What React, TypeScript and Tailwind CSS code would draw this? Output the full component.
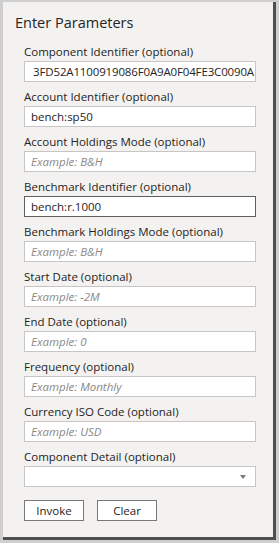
import React from "react";

type Field = {
  label: string;
  value?: string;
  placeholder?: string;
  focused?: boolean;
  overflow?: boolean;
};

const FIELDS: Field[] = [
  { label: "Component Identifier (optional)", value: "3FD52A1100919086F0A9A0F04FE3C0090A", overflow: true },
  { label: "Account Identifier (optional)", value: "bench:sp50" },
  { label: "Account Holdings Mode (optional)", placeholder: "Example: B&H" },
  { label: "Benchmark Identifier (optional)", value: "bench:r.1000", focused: true },
  { label: "Benchmark Holdings Mode (optional)", placeholder: "Example: B&H" },
  { label: "Start Date (optional)", placeholder: "Example: -2M" },
  { label: "End Date (optional)", placeholder: "Example: 0" },
  { label: "Frequency (optional)", placeholder: "Example: Monthly" },
  { label: "Currency ISO Code (optional)", placeholder: "Example: USD" },
];

const font = { fontFamily: '"Open Sans", "Noto Sans", sans-serif' };

function TextBox({ field }: { field: Field }) {
  const border = field.focused ? "border-[#605e5c]" : "border-[#c8c6c4]";
  return (
    <div
      className={`h-[21px] w-[232px] bg-white border ${border} flex items-center overflow-hidden whitespace-nowrap text-[11.5px] leading-[16px] ${
        field.overflow ? "justify-end pr-[1px] tracking-[-0.15px]" : "pl-[6px]"
      }`}
    >
      {field.value ? (
        <span className="text-[#252423]">{field.value}</span>
      ) : (
        <span className="italic text-[#8a8886]">{field.placeholder}</span>
      )}
    </div>
  );
}

export default function App() {
  return (
    <div className="w-[279px] h-[543px] bg-[#cfcfcf] overflow-hidden" style={font}>
      <div className="mt-[2px] ml-[3px] w-[273px] h-[538px] bg-[#f3f2f1] border-r-[3px] border-b-[3px] border-[#4f4f4f]">
        <div className="pl-[12px] pt-[11px] h-[35px] text-[14.5px] leading-[20px] text-[#252423]">
          Enter Parameters
        </div>
        <div className="pl-[21px]">
          {FIELDS.map((f) => (
            <div key={f.label}>
              <div className="pt-[7px] pb-[1px] text-[11.5px] leading-[16px] text-[#252423] whitespace-nowrap">
                {f.label}
              </div>
              <TextBox field={f} />
            </div>
          ))}
          <div>
            <div className="pt-[7px] pb-[1px] text-[11.5px] leading-[16px] text-[#252423]">
              Component Detail (optional)
            </div>
            <div className="h-[21px] w-[232px] bg-white border border-[#c8c6c4] flex items-center justify-end pr-[9px]">
              <div className="w-0 h-0 border-l-[3.5px] border-r-[3.5px] border-t-[4px] border-l-transparent border-r-transparent border-t-[#797775]" />
            </div>
          </div>
          <div className="flex gap-[13px] mt-[13px]">
            <button className="h-[21px] w-[60px] bg-white border border-[#7a7876] text-[11.5px] leading-[16px] text-[#252423]">
              Invoke
            </button>
            <button className="h-[21px] w-[60px] bg-white border border-[#7a7876] text-[11.5px] leading-[16px] text-[#252423]">
              Clear
            </button>
          </div>
        </div>
      </div>
    </div>
  );
}
